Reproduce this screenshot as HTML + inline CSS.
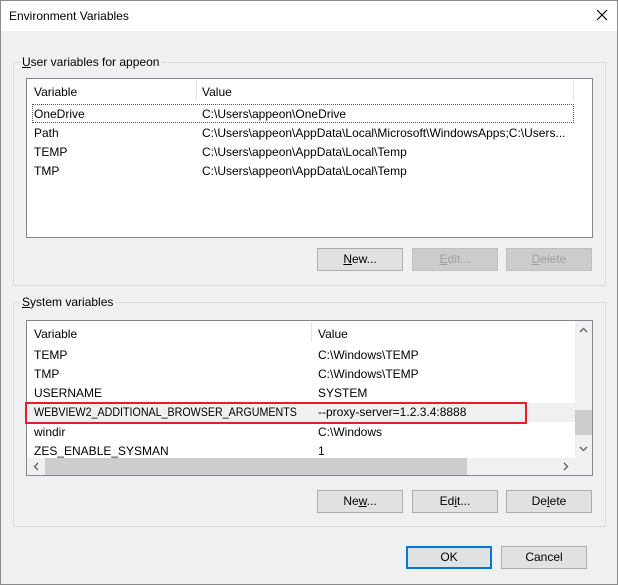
<!DOCTYPE html>
<html><head><meta charset="utf-8"><style>
*{margin:0;padding:0;box-sizing:border-box}
body{width:618px;height:585px;overflow:hidden;background:#f0f0f0;font-family:"Liberation Sans",sans-serif;font-size:12px;color:#000;position:relative}
.a{position:absolute}
.win{left:0;top:0;width:618px;height:585px;border:1px solid #8a8a8a;}
.title{left:1px;top:1px;width:616px;height:30px;background:#fff}
.grp{border:1px solid #dcdcdc}
.lbl{background:#f0f0f0;padding:0 2px;line-height:14px}
.lv{background:#fff;border:1px solid #828790}
.t{white-space:nowrap;line-height:14px}
.btn{background:#e1e1e1;border:1px solid #adadad;text-align:center;line-height:21px}
.dis{color:#a0a0a0;background:#ccc;border-color:#bfbfbf}
u{text-decoration:underline}
</style></head><body>
<div class="a win"></div>
<div class="a title"></div>
<div class="a t" style="left:9px;top:9px">Environment Variables</div>
<svg class="a" style="left:596px;top:9px" width="12" height="12"><path d="M1 1L11 11M11 1L1 11" stroke="#000" stroke-width="1.2"/></svg>

<div class="a grp" style="left:13px;top:62px;width:593px;height:224px"></div>
<div class="a lbl t" style="left:20px;top:55px"><u>U</u>ser variables for appeon</div>
<div class="a lv" style="left:26px;top:78px;width:567px;height:160px"></div>
<div class="a" style="left:196px;top:80px;width:1px;height:20px;background:#e5e5e5"></div>
<div class="a" style="left:573px;top:80px;width:1px;height:20px;background:#e5e5e5"></div>
<div class="a t" style="left:34px;top:85px">Variable</div>
<div class="a t" style="left:202px;top:85px">Value</div>
<div class="a" style="left:32px;top:104px;width:542px;height:19px;border:1px dotted #555"></div>
<div class="a t" style="left:34px;top:107px">OneDrive</div><div class="a t" style="left:202px;top:107px">C:\Users\appeon\OneDrive</div>
<div class="a t" style="left:34px;top:126px">Path</div><div class="a t" style="left:202px;top:126px">C:\Users\appeon\AppData\Local\Microsoft\WindowsApps;C:\Users...</div>
<div class="a t" style="left:34px;top:145px">TEMP</div><div class="a t" style="left:202px;top:145px">C:\Users\appeon\AppData\Local\Temp</div>
<div class="a t" style="left:34px;top:164px">TMP</div><div class="a t" style="left:202px;top:164px">C:\Users\appeon\AppData\Local\Temp</div>
<div class="a btn" style="left:317px;top:248px;width:86px;height:23px"><u>N</u>ew...</div>
<div class="a btn dis" style="left:412px;top:248px;width:86px;height:23px"><u>E</u>dit...</div>
<div class="a btn dis" style="left:506px;top:248px;width:86px;height:23px"><u>D</u>elete</div>

<div class="a grp" style="left:13px;top:302px;width:593px;height:225px"></div>
<div class="a lbl t" style="left:20px;top:295px"><u>S</u>ystem variables</div>
<div class="a lv" style="left:26px;top:320px;width:567px;height:156px"></div>
<div class="a" style="left:311px;top:322px;width:1px;height:20px;background:#e5e5e5"></div>
<div class="a t" style="left:34px;top:327px">Variable</div>
<div class="a t" style="left:318px;top:327px">Value</div>
<div class="a" style="left:27px;top:403px;width:548px;height:19px;background:#f0f0f0"></div>
<div class="a t" style="left:34px;top:348px">TEMP</div><div class="a t" style="left:318px;top:348px">C:\Windows\TEMP</div>
<div class="a t" style="left:34px;top:367px">TMP</div><div class="a t" style="left:318px;top:367px">C:\Windows\TEMP</div>
<div class="a t" style="left:34px;top:386px">USERNAME</div><div class="a t" style="left:318px;top:386px">SYSTEM</div>
<div class="a t" style="left:34px;top:405px;transform:scaleX(0.89);transform-origin:0 0">WEBVIEW2_ADDITIONAL_BROWSER_ARGUMENTS</div><div class="a t" style="left:318px;top:405px">--proxy-server=1.2.3.4:8888</div>
<div class="a t" style="left:34px;top:425px">windir</div><div class="a t" style="left:318px;top:425px">C:\Windows</div>
<div class="a t" style="left:34px;top:444px">ZES_ENABLE_SYSMAN</div><div class="a t" style="left:318px;top:444px">1</div>
<div class="a" style="left:25px;top:402px;width:502px;height:22px;border:2px solid #e0202a"></div>
<div class="a" style="left:575px;top:321px;width:17px;height:137px;background:#f0f0f0"></div>
<div class="a" style="left:575px;top:410px;width:17px;height:25px;background:#cdcdcd"></div>
<svg class="a" style="left:579px;top:327px" width="9" height="6"><path d="M1 5L4.5 1.5L8 5" stroke="#606060" fill="none" stroke-width="1.3"/></svg>
<svg class="a" style="left:579px;top:446px" width="9" height="6"><path d="M1 1L4.5 4.5L8 1" stroke="#606060" fill="none" stroke-width="1.3"/></svg>
<div class="a" style="left:27px;top:458px;width:565px;height:17px;background:#f0f0f0"></div>
<div class="a" style="left:45px;top:458px;width:422px;height:17px;background:#cdcdcd"></div>
<svg class="a" style="left:33px;top:462px" width="6" height="9"><path d="M5 1L1.5 4.5L5 8" stroke="#606060" fill="none" stroke-width="1.3"/></svg>
<svg class="a" style="left:563px;top:462px" width="6" height="9"><path d="M1 1L4.5 4.5L1 8" stroke="#606060" fill="none" stroke-width="1.3"/></svg>
<div class="a btn" style="left:317px;top:490px;width:86px;height:23px">Ne<u>w</u>...</div>
<div class="a btn" style="left:412px;top:490px;width:86px;height:23px">Ed<u>i</u>t...</div>
<div class="a btn" style="left:506px;top:490px;width:86px;height:23px">De<u>l</u>ete</div>

<div class="a btn" style="left:406px;top:546px;width:86px;height:23px;border:2px solid #0078d7;line-height:19px">OK</div>
<div class="a btn" style="left:501px;top:546px;width:86px;height:23px">Cancel</div>
</body></html>
